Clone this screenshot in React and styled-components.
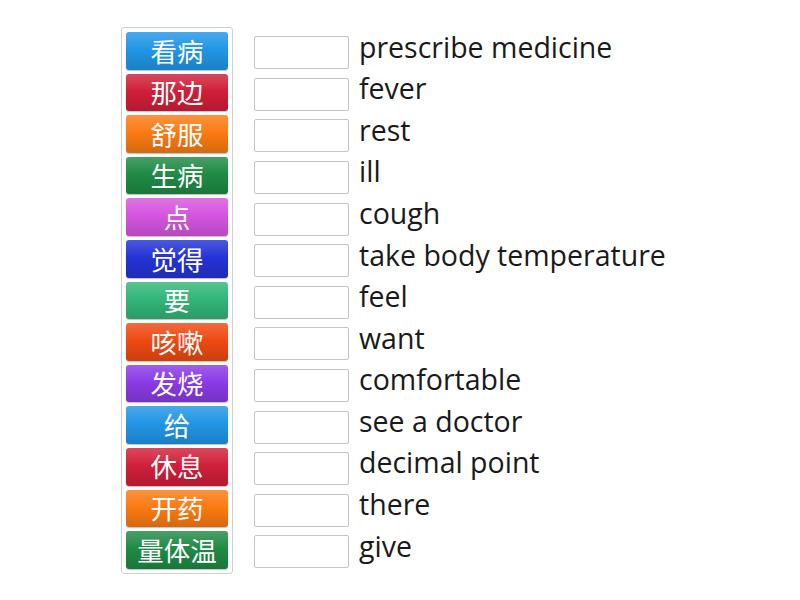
import React from 'react'
import styled, { createGlobalStyle } from 'styled-components'

const GlobalStyle = createGlobalStyle`
  body {
    margin: 0;
    background: #fff;
    font-family: "Open Sans", "Noto Sans CJK SC", sans-serif;
  }
`;

const tiles = [
  { label: '看病', color: '#2196e6' },
  { label: '那边', color: '#d11f3a' },
  { label: '舒服', color: '#fb7b12' },
  { label: '生病', color: '#1f8b45' },
  { label: '点', color: '#d655df' },
  { label: '觉得', color: '#2533d6' },
  { label: '要', color: '#33b679' },
  { label: '咳嗽', color: '#ee4a12' },
  { label: '发烧', color: '#8a3be6' },
  { label: '给', color: '#2196e6' },
  { label: '休息', color: '#d11f3a' },
  { label: '开药', color: '#fb7b12' },
  { label: '量体温', color: '#1f8b45' },
];

const answers = [
  'prescribe medicine',
  'fever',
  'rest',
  'ill',
  'cough',
  'take body temperature',
  'feel',
  'want',
  'comfortable',
  'see a doctor',
  'decimal point',
  'there',
  'give',
];

const App = () => {
  return (
    <>
      <GlobalStyle />
      <Page>
        <TileBox>
          {tiles.map((t) => (
            <Tile key={t.label} $color={t.color}>{t.label}</Tile>
          ))}
        </TileBox>
        <Answers>
          {answers.map((a) => (
            <Row key={a}>
              <Slot />
              <Label>{a}</Label>
            </Row>
          ))}
        </Answers>
      </Page>
    </>
  );
};

export default App;

const Page = styled.div`
  display: flex;
  align-items: flex-start;
  gap: 21px;
  padding: 27px 0 0 121px;
`;

const TileBox = styled.div`
  display: flex;
  flex-direction: column;
  gap: 4px;
  width: 102px;
  padding: 4px;
  border: 1px solid #cfcfcf;
  border-radius: 3px;
`;

const Tile = styled.div`
  height: 37.6px;
  display: flex;
  align-items: center;
  justify-content: center;
  border-radius: 3px;
  color: #fff;
  font-family: "Noto Sans CJK SC", sans-serif;
  font-size: 26.5px;
  line-height: 1;
  background: linear-gradient(
    to bottom,
    color-mix(in srgb, ${(p) => p.$color} 82%, #fff) 0%,
    ${(p) => p.$color} 45%,
    color-mix(in srgb, ${(p) => p.$color} 85%, #000) 100%
  );
  box-shadow: 0 1px 1px rgba(0, 0, 0, 0.25);
`;

const Answers = styled.div`
  display: flex;
  flex-direction: column;
  padding-top: 5px;
`;

const Row = styled.div`
  height: 41.6px;
  display: flex;
  align-items: center;
  gap: 10px;
`;

const Slot = styled.div`
  width: 93px;
  height: 31px;
  border: 1px solid #c4c4c4;
  border-radius: 2px;
  background: #fff;
  flex-shrink: 0;
`;

const Label = styled.span`
  font-family: "Open Sans", sans-serif;
  font-size: 28.5px;
  color: #1a1a1a;
  line-height: 1;
  margin-top: -12px;
  white-space: nowrap;
`;
